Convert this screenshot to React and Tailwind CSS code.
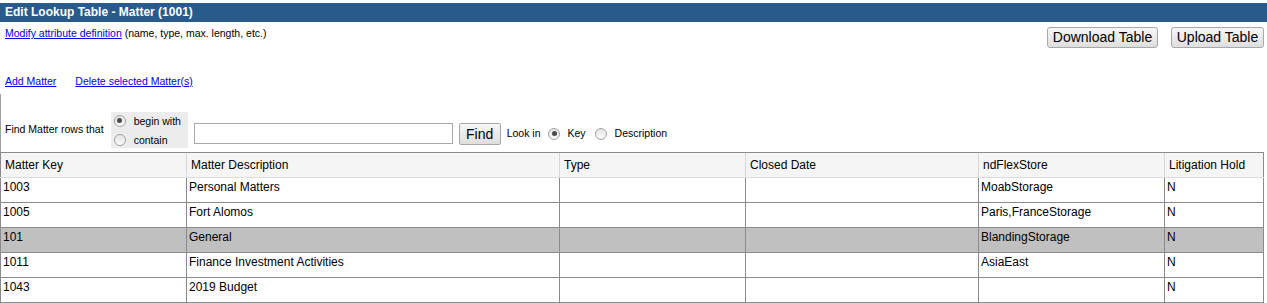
import React from "react";

function Radio({ checked }) {
  return (
    <span className="inline-flex items-center justify-center w-[12px] h-[12px] rounded-full border border-[#a2a2a2] bg-linear-to-b from-[#e4e4e4] to-[#fafafa] shrink-0">
      {checked && <span className="w-[5px] h-[5px] rounded-full bg-[#4a4a4a]" />}
    </span>
  );
}

const btn =
  "h-[21px] border border-[#a8a8a8] rounded-[3px] bg-linear-to-b from-[#f7f7f7] to-[#dedede] text-[14px] leading-[19px] text-black flex items-center justify-center";

const rows = [
  ["1003", "Personal Matters", "", "", "MoabStorage", "N", false],
  ["1005", "Fort Alomos", "", "", "Paris,FranceStorage", "N", false],
  ["101", "General", "", "", "BlandingStorage", "N", true],
  ["1011", "Finance Investment Activities", "", "", "AsiaEast", "N", false],
  ["1043", "2019 Budget", "", "", "", "N", false],
];

const headers = ["Matter Key", "Matter Description", "Type", "Closed Date", "ndFlexStore", "Litigation Hold"];
const widths = [186, 373, 186, 233, 186, 99];

export default function App() {
  return (
    <div className="w-[1267px] h-[303px] overflow-hidden bg-white text-black text-[10.5px] font-['Liberation_Sans',Arial,sans-serif]">
      <div className="mt-[3px] h-[19px] bg-[#285a8c] text-white font-bold text-[12px] leading-[19px] pl-[5px]">
        Edit Lookup Table - Matter (1001)
      </div>

      <div className="flex justify-between items-start pl-[5px] pr-[3px]">
        <div className="pt-[4px] leading-[14px]">
          <a className="text-[#0000ee] underline cursor-pointer">Modify attribute definition</a> (name, type, max. length, etc.)
        </div>
        <div className="flex gap-[13px] pt-[5px]">
          <button className={btn + " w-[111px]"}>Download Table</button>
          <button className={btn + " w-[93px]"}>Upload Table</button>
        </div>
      </div>

      <div className="flex gap-[19px] pl-[5px] mt-[26px] leading-[14px]">
        <a className="text-[#0000ee] underline cursor-pointer">Add Matter</a>
        <a className="text-[#0000ee] underline cursor-pointer">Delete selected Matter(s)</a>
      </div>

      <div className="mt-[6px] border-l border-[#a0a0a0] pt-[18px] pb-[4px]">
        <div className="flex items-center pl-[4px] h-[36px]">
          <span className="mr-[7px]">Find Matter rows that</span>
          <div className="w-[77px] h-[36px] bg-[#ececec] flex flex-col justify-center gap-[7px] pl-[3px] mr-[6px]">
            <div className="flex items-center gap-[8px] leading-[12px]">
              <Radio checked />
              <span>begin with</span>
            </div>
            <div className="flex items-center gap-[8px] leading-[12px]">
              <Radio />
              <span>contain</span>
            </div>
          </div>
          <div className="mt-[7px] flex items-center">
            <input
              type="text"
              className="w-[259px] h-[21px] border border-[#a9a9a9] bg-white outline-none mr-[6px]"
            />
            <button className="w-[42px] h-[22px] border border-[#a8a8a8] rounded-[2px] bg-linear-to-b from-[#f7f7f7] to-[#dedede] text-[14px] leading-[20px] mr-[6px]">
              Find
            </button>
            <span className="mr-[8px]">Look in</span>
            <Radio checked />
            <span className="ml-[7px] mr-[9px]">Key</span>
            <Radio />
            <span className="ml-[8px]">Description</span>
          </div>
        </div>
      </div>

      <table className="table-fixed border-collapse w-[1263px] text-[12px] leading-[14px]">
        <colgroup>
          {widths.map((w, i) => (
            <col key={i} style={{ width: w }} />
          ))}
        </colgroup>
        <thead>
          <tr className="h-[25px] bg-[#f5f5f5]">
            {headers.map((h, i) => (
              <th
                key={h}
                className={
                  "font-normal text-left align-middle pl-[4px] border-t border-t-[#8a8a8a] border-b border-b-[#dcdcdc] " +
                  (i === 0 ? "border-l border-l-[#8a8a8a] " : "border-l border-l-[#d6d6d6] ") +
                  (i === headers.length - 1 ? "border-r border-r-[#8a8a8a]" : "")
                }
              >
                {h}
              </th>
            ))}
          </tr>
        </thead>
        <tbody>
          {rows.map((r) => (
            <tr key={r[0]} className={"h-[25px] " + (r[6] ? "bg-[#c0c0c0]" : "bg-white")}>
              {r.slice(0, 6).map((c, i) => (
                <td
                  key={i}
                  className="align-top pt-[2px] pl-[2px] border border-[#8a8a8a]"
                >
                  {c}
                </td>
              ))}
            </tr>
          ))}
        </tbody>
      </table>
    </div>
  );
}
